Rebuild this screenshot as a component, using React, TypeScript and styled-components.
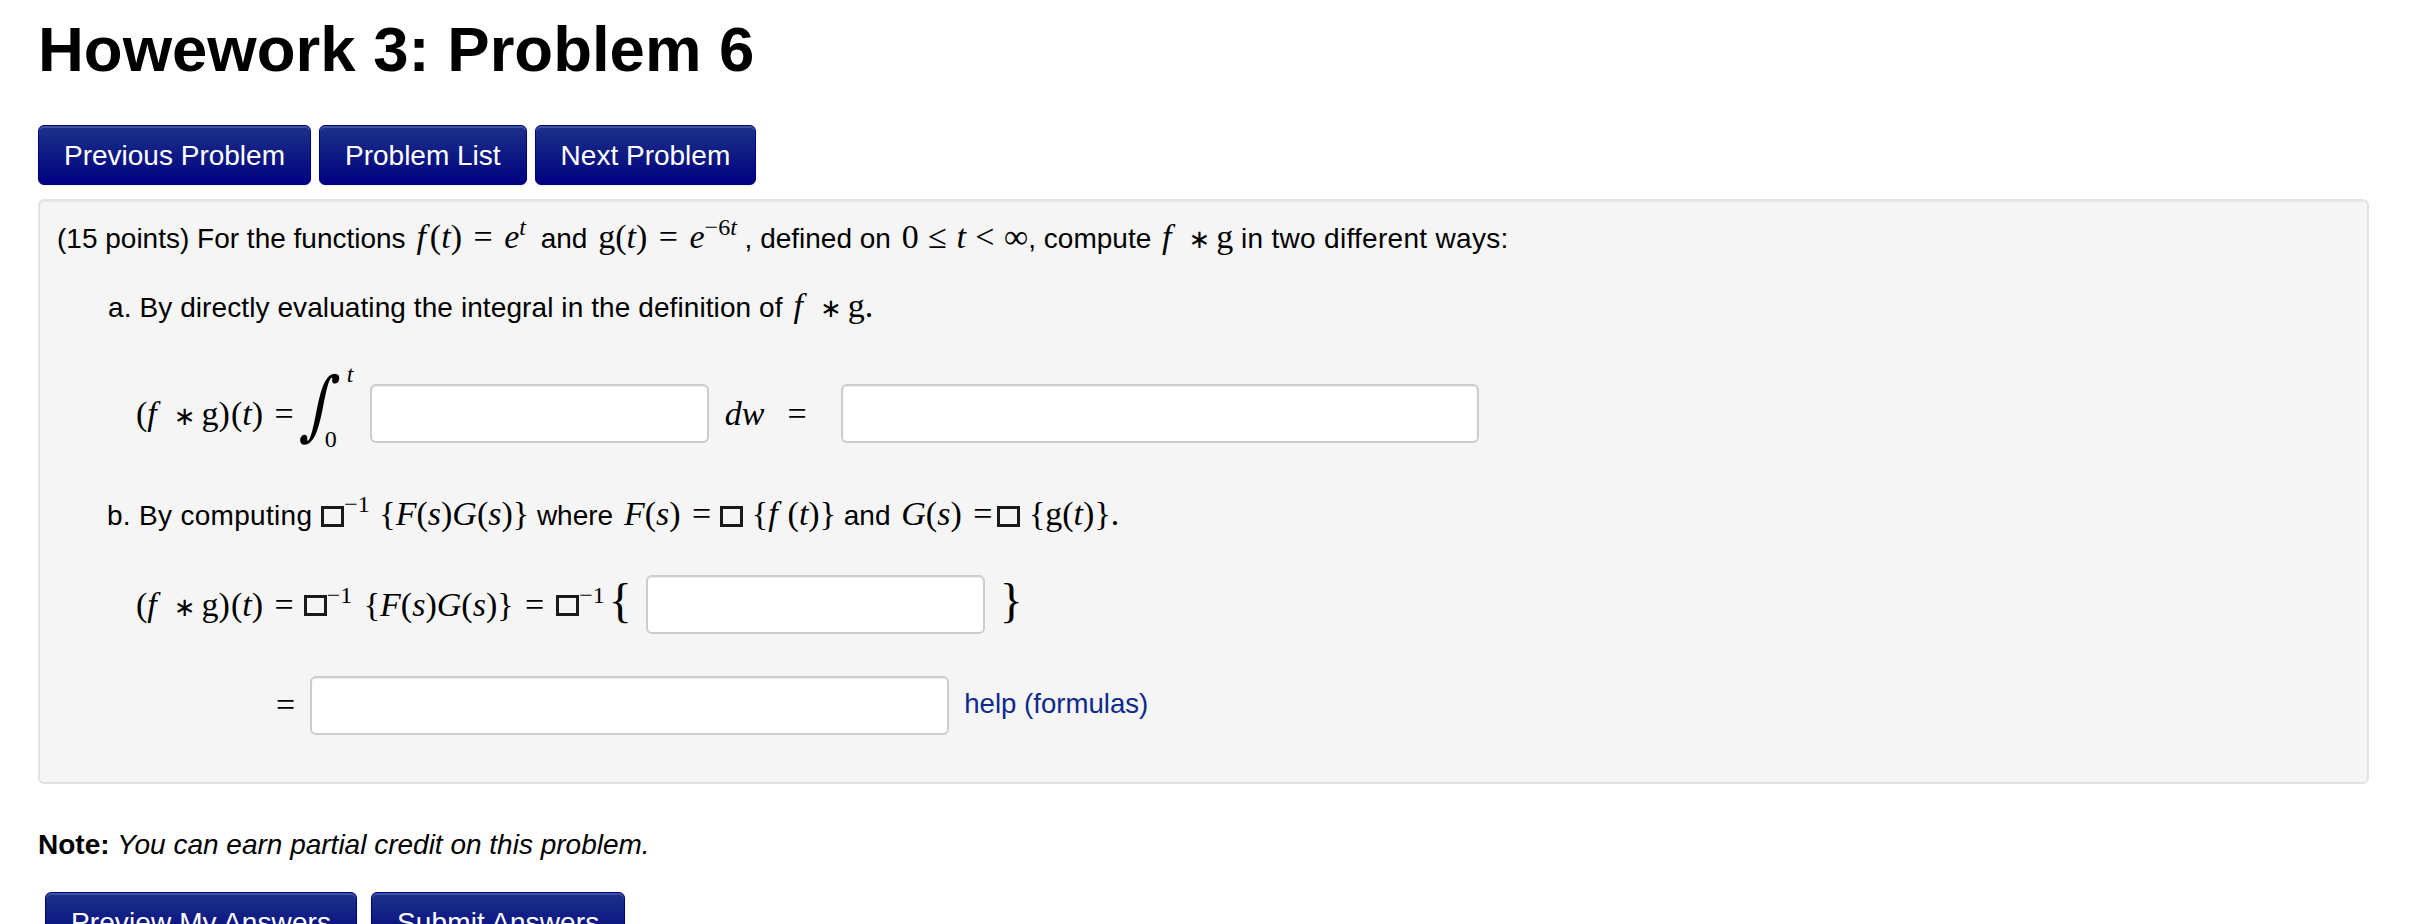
import React from 'react';
import styled, { createGlobalStyle } from 'styled-components';

const GlobalStyle = createGlobalStyle`
  html, body {
    margin: 0;
    height: 924px;
    overflow: hidden;
    background: #fff;
    color: #000;
    font-family: "Liberation Sans", Arial, sans-serif;
    font-size: 28px;
  }
`;

export default function App() {
  return (
    <>
      <GlobalStyle />
      <Page>
        <Title>Howework 3: Problem 6</Title>
        <NavBar>
          <NavButton>Previous Problem</NavButton>
          <NavButton>Problem List</NavButton>
          <NavButton>Next Problem</NavButton>
        </NavBar>
        <ProblemPanel>
          <IntroLine>
            (15 points) For the functions{' '}
            <Math><F>f</F><Paren>(</Paren><i>t</i>) <Rel>=</Rel> <i>e</i><Sup $tail={7}><i>t</i></Sup></Math> and{' '}
            <Math>g(<i>t</i>) <Rel>=</Rel> <i>e</i><Sup>−6<i>t</i></Sup></Math> , defined on{' '}
            <Math>0 <Ineq>≤</Ineq> <i>t</i> <Ineq>&lt;</Ineq> ∞</Math>, compute{' '}
            <Math><F>f</F><Star>∗</Star>g</Math> <SpacedText>in two different ways:</SpacedText>
          </IntroLine>
          <StepLine>
            a. By directly evaluating the integral in the definition of{' '}
            <Math><F>f</F><Star>∗</Star>g.</Math>
          </StepLine>
          <IntegralRow>
            <Math>(<F>f</F><Star>∗</Star>g)<Paren>(</Paren><i>t</i>) <Rel>=</Rel></Math>
            <Integral>
              <IntegralSign>∫</IntegralSign>
              <UpperLimit>t</UpperLimit>
              <LowerLimit>0</LowerLimit>
            </Integral>
            <AnswerBox $width={339} />
            <Differential><i>dw</i></Differential>
            <Math><Rel>=</Rel></Math>
            <AnswerBox $width={638} $gap={31} />
          </IntegralRow>
          <LaplaceLine>
            <SpacedText>b. By computing</SpacedText><LaplaceBox $gap={9} /><Math><Sup $tail={1}>−1</Sup> {'{'}<i>F</i>(<i>s</i>)<i>G</i>(<i>s</i>){'}'}</Math> where{' '}
            <Math><i>F</i>(<i>s</i>) <Rel>=</Rel></Math><LaplaceBox />
            <Math> {'{'}<F $pad={10}>f</F>(<i>t</i>){'}'}</Math> and{' '}
            <Math><i>G</i>(<i>s</i>) <Rel>=</Rel></Math><LaplaceBox $gap={2} />
            <Math> {'{'}g(<i>t</i>){'}'}.</Math>
          </LaplaceLine>
          <ConvolutionRow>
            <Math>(<F>f</F><Star>∗</Star>g)<Paren>(</Paren><i>t</i>) <Rel>=</Rel></Math><LaplaceBox $gap={7} />
            <Math><Sup $tail={3}>−1</Sup> {'{'}<i>F</i>(<i>s</i>)<i>G</i>(<i>s</i>){'}'} <Rel>=</Rel></Math><LaplaceBox $gap={9} />
            <Math><Sup>−1</Sup></Math>
            <BigBrace $side="left">{'{'}</BigBrace>
            <AnswerBox $width={339} />
            <BigBrace $side="right">{'}'}</BigBrace>
          </ConvolutionRow>
          <ResultRow>
            <Math><Rel>=</Rel></Math>
            <AnswerBox $width={639} $gap={12} />
            <HelpLink href="#">help (formulas)</HelpLink>
          </ResultRow>
        </ProblemPanel>
        <NoteLine>
          <strong>Note:</strong> <em>You can earn partial credit on this problem.</em>
        </NoteLine>
        <SubmitBar>
          <SubmitButton>Preview My Answers</SubmitButton>
          <SubmitButton>Submit Answers</SubmitButton>
        </SubmitBar>
      </Page>
    </>
  );
}

const Page = styled.div`
  padding: 0 38px;
`;

const Title = styled.h1`
  margin: 0;
  padding-top: 16px;
  height: 125px;
  box-sizing: border-box;
  font-size: 63.5px;
  line-height: 66px;
  font-weight: bold;
`;

const NavBar = styled.div`
  display: flex;
  gap: 8px;
`;

const NavButton = styled.button`
  height: 60px;
  padding: 2px 25px 0;
  border: 1px solid #000080;
  border-radius: 6px;
  background: linear-gradient(to bottom, #1c3388, #000080);
  box-shadow: inset 0 2px 0 rgba(255, 255, 255, 0.16), 0 1px 2px rgba(0, 0, 0, 0.08);
  color: #fff;
  font-family: "Liberation Sans", Arial, sans-serif;
  font-size: 28px;
`;

const SubmitButton = styled(NavButton)`
  letter-spacing: 0.1px;
`;

const ProblemPanel = styled.div`
  box-sizing: border-box;
  margin-top: 14px;
  width: 2331px;
  height: 585px;
  padding: 0 17px;
  background: #f5f5f5;
  border: 2px solid #e3e3e3;
  border-radius: 6px;
  box-shadow: inset 0 1px 1px rgba(0, 0, 0, 0.05);
`;

const IntroLine = styled.div`
  margin-top: 18px;
  height: 40px;
  line-height: 40px;
  white-space: nowrap;
`;

const StepLine = styled.div`
  margin: 29px 0 0 51px;
  height: 40px;
  line-height: 40px;
  letter-spacing: 0.09px;
  white-space: nowrap;
`;

const Math = styled.span`
  padding-left: 3px;
  font-family: "Liberation Serif", "Times New Roman", serif;
  font-size: 34px;
  line-height: 1;
  letter-spacing: 0;
  white-space: pre;
`;

const F = styled.i<{ $pad?: number }>`
  padding-right: ${props => props.$pad ?? 3}px;
`;

const Paren = styled.span`
  padding-left: 1px;
`;

const Rel = styled.span`
  padding: 0 3px;
`;

const Ineq = styled.span`
  padding: 0 1px;
`;

const Star = styled.span`
  padding: 0 6px 0 14px;
  font-family: "DejaVu Sans", sans-serif;
  font-size: 26px;
`;

const Sup = styled.sup<{ $tail?: number }>`
  padding-right: ${props => props.$tail ?? 0}px;
  font-size: 24px;
  line-height: 0;
  vertical-align: 13px;
`;

const IntegralRow = styled.div`
  display: flex;
  align-items: center;
  height: 59px;
  margin: 56px 0 0 76px;
`;

const Integral = styled.span`
  position: relative;
  display: inline-block;
  flex: none;
  width: 63px;
  height: 59px;
  margin-left: 10px;
`;

const IntegralSign = styled.span`
  position: absolute;
  left: -2px;
  top: -24px;
  font-family: "DejaVu Serif", serif;
  font-size: 60px;
  line-height: 90px;
  transform: skewX(-10deg) scaleY(1.26);
`;

const UpperLimit = styled.i`
  position: absolute;
  left: 40px;
  top: -23px;
  font-family: "Liberation Serif", serif;
  font-size: 24px;
`;

const LowerLimit = styled.span`
  position: absolute;
  left: 18px;
  bottom: -10px;
  font-family: "Liberation Serif", serif;
  font-size: 24px;
`;

const AnswerBox = styled.div<{ $width: number; $gap?: number }>`
  box-sizing: border-box;
  flex: none;
  width: ${props => props.$width}px;
  height: 59px;
  margin-left: ${props => props.$gap ?? 0}px;
  background: #fff;
  border: 2px solid #ccc;
  border-radius: 6px;
  box-shadow: inset 0 1px 1px rgba(0, 0, 0, 0.075);
`;

const Differential = styled.span`
  font-family: "Liberation Serif", serif;
  font-size: 34px;
  margin: 0 17px 0 16px;
`;

const LaplaceLine = styled.div`
  margin: 53px 0 0 50px;
  height: 40px;
  line-height: 40px;
  white-space: nowrap;
`;

const SpacedText = styled.span`
  letter-spacing: 0.3px;
`;

const LaplaceBox = styled.span<{ $gap?: number }>`
  display: inline-block;
  box-sizing: border-box;
  flex: none;
  width: 23px;
  height: 21px;
  margin: 0 -3px -2px ${props => props.$gap ?? 6}px;
  border: 3px solid #1a1a1a;
`;

const ConvolutionRow = styled.div`
  display: flex;
  align-items: center;
  height: 59px;
  margin: 39px 0 0 76px;
  white-space: pre;
`;

const BigBrace = styled.span<{ $side: 'left' | 'right' }>`
  font-family: "Liberation Serif", serif;
  font-size: 48px;
  margin: ${props => (props.$side === 'left' ? '-8px 14px 0 4px' : '-8px 0 0 15px')};
`;

const ResultRow = styled.div`
  display: flex;
  align-items: center;
  height: 60px;
  margin: 41px 0 0 213px;
`;

const HelpLink = styled.a`
  margin: 0 0 2px 15px;
  color: #0d2a8a;
  text-decoration: none;
  font-size: 27.6px;
`;

const NoteLine = styled.div`
  margin-top: 41px;
  height: 40px;
  line-height: 40px;
`;

const SubmitBar = styled.div`
  display: flex;
  gap: 14px;
  margin: 27px 0 0 7px;
`;
